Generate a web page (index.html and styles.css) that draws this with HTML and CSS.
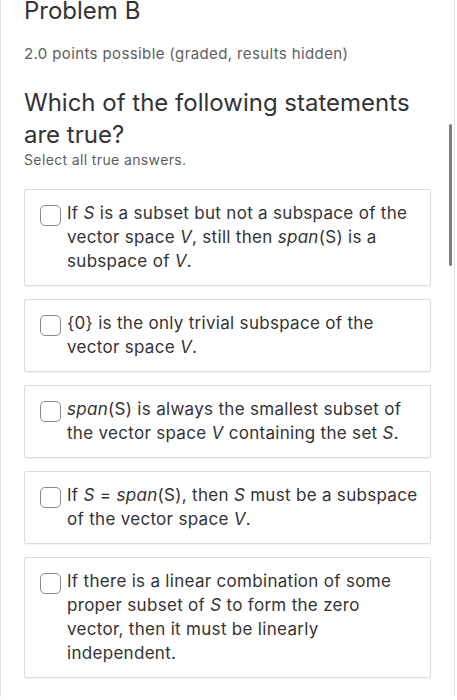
FILE: index.html
```html
<!DOCTYPE html>
<html lang="en">

<head>
    <meta charset="UTF-8">
    <meta name="viewport" content="width=device-width, initial-scale=1">
    <title>Problem B</title>
    <link rel="stylesheet" href="styles.css">
</head>

<body>
    <div class="page">
        <h2 class="problem-title">Problem B</h2>
        <p class="points">2.0 points possible (graded, results hidden)</p>

        <h3 class="question">Which of the following statements are true?</h3>
        <p class="hint">Select all true answers.</p>

        <div class="choices">
            <label class="choice">
                <span class="check"></span>
                <span class="choice-text">If <i>S</i> is a subset but not a subspace of the vector space <i>V</i>, still then <i>span</i>(S) is a subspace of <i>V</i>.</span>
            </label>
            <label class="choice">
                <span class="check"></span>
                <span class="choice-text">{0} is the only trivial subspace of the vector space <i>V</i>.</span>
            </label>
            <label class="choice">
                <span class="check"></span>
                <span class="choice-text"><i>span</i>(S) is always the smallest subset of the vector space <i>V</i> containing the set <i>S</i>.</span>
            </label>
            <label class="choice">
                <span class="check"></span>
                <span class="choice-text">If <i>S</i> = <i>span</i>(S), then <i>S</i> must be a subspace of the vector space <i>V</i>.</span>
            </label>
            <label class="choice">
                <span class="check"></span>
                <span class="choice-text">If there is a linear combination of some proper subset of <i>S</i> to form the zero vector, then it must be linearly independent.</span>
            </label>
        </div>
    </div>
    <div class="scroll-thumb"></div>
</body>

</html>
```

FILE: styles.css
```css
:root {
    --text-main: #333333;
    --text-muted: #5e5e5e;
    --line-light: #e2e2e2;
    --card-border: #dcdcdc;
    --check-border: #8a8a8a;
    --font-main: Inter, "Liberation Sans", sans-serif;
}

html,
body {
    margin: 0;
    padding: 0;
    background: #ffffff;
    height: 100%;
    overflow: hidden;
}

body {
    font-family: var(--font-main);
    color: var(--text-main);
}

.page {
    box-sizing: border-box;
    min-height: 100%;
    margin: 0 2px 0 0;
    padding: 0 23px 0 23px;
    border-left: 1px solid var(--line-light);
    border-right: 1px solid var(--line-light);
}

.problem-title {
    margin: -3px 0 0 0;
    font-size: 24px;
    line-height: 28px;
    font-weight: 400;
}

.points {
    margin: 19px 0 0 0;
    font-size: 15px;
    line-height: 20px;
    letter-spacing: 0.38px;
    color: var(--text-muted);
}

.question {
    margin: 23px 0 0 0;
    font-size: 24px;
    line-height: 32px;
    font-weight: 400;
}

.hint {
    margin: -1px 0 0 0;
    font-size: 14px;
    line-height: 20px;
    letter-spacing: 0.37px;
    color: var(--text-muted);
}

.choices {
    display: flex;
    flex-direction: column;
    gap: 13px;
    margin-top: 19px;
}

.choice {
    display: flex;
    align-items: flex-start;
    gap: 6px;
    padding: 11px 10px 12px 15px;
    border: 1px solid var(--card-border);
    border-radius: 2px;
    box-shadow: 0 1px 1px rgba(0, 0, 0, 0.05);
    font-size: 17px;
    line-height: 24px;
    letter-spacing: 0.3px;
}

.check {
    flex: none;
    width: 19px;
    height: 19px;
    margin-top: 4px;
    border: 1.5px solid var(--check-border);
    border-radius: 5px;
}

.choice-text i {
    font-style: italic;
}

.scroll-thumb {
    position: absolute;
    left: 449px;
    top: 124px;
    width: 3px;
    height: 142px;
    border-radius: 2px;
    background: #7d7d7d;
}
```
